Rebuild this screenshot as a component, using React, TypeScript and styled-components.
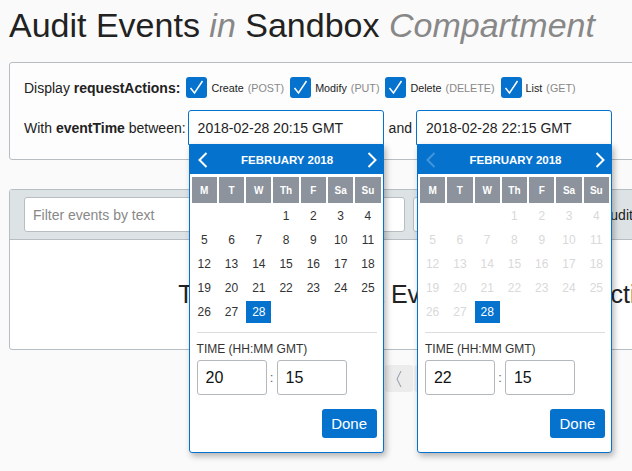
import styled, { createGlobalStyle } from "styled-components";

const GlobalStyle = createGlobalStyle`
	html {
		overflow: hidden;
		background: #fafafa;
	}
	body {
		margin: 0;
		padding: 0;
		font-family: "Liberation Sans", Arial, sans-serif;
		color: #222;
	}
`;

const BLUE = "#0572ce";
const BORDER = "#b6bec4";

const Page = styled.div`
	width: 854px;
	min-height: 100vh;
	box-sizing: border-box;
	padding: 5px 9px 0;
`;

const Title = styled.h1`
	margin: 0;
	font-size: 34px;
	line-height: 40px;
	font-weight: normal;
	color: #222;
	em {
		color: #888;
	}
`;

const FilterPanel = styled.div`
	margin-top: 17px;
	border: 1px solid ${BORDER};
	border-radius: 3px;
	background: #fdfdfd;
	padding: 14px;
	display: flex;
	flex-direction: column;
	gap: 12px;
	font-size: 14px;
`;

const Row = styled.div`
	display: flex;
	align-items: center;
`;

const RowLabel = styled.span<{ $tight?: boolean }>`
	margin-right: ${({ $tight }) => ($tight ? "2px" : "6px")};
	white-space: nowrap;
`;

const CheckItem = styled.label`
	display: flex;
	align-items: center;
	gap: 4px;
	margin-right: 6px;
	font-size: 10.75px;
	color: #222;
	white-space: nowrap;
	span.method {
		color: #888;
	}
`;

const CheckBox = styled.span`
	width: 21px;
	height: 21px;
	border-radius: 3px;
	background: ${BLUE};
	display: flex;
	align-items: center;
	justify-content: center;
`;

const DateField = styled.div`
	position: relative;
	width: 196px;
	height: 35px;
	box-sizing: border-box;
	border: 1px solid ${BLUE};
	border-radius: 3px 3px 0 0;
	background: #fff;
	display: flex;
	align-items: center;
	padding-left: 9px;
	font-size: 14px;
	color: #222;
`;

const AndText = styled.span`
	margin: 0 4px 0 5px;
`;

const Popup = styled.div`
	position: absolute;
	top: 100%;
	left: 0;
	right: -1px;
	z-index: 10;
	background: #fff;
	border: 1px solid ${BLUE};
	border-radius: 0 0 3px 3px;
	box-shadow: 2px 3px 6px rgba(0, 0, 0, 0.3);
`;

const CalHeader = styled.div`
	height: 29px;
	background: ${BLUE};
	color: #fff;
	display: flex;
	align-items: center;
	justify-content: space-between;
	padding: 0 6px 0 8px;
	font-weight: bold;
	font-size: 11.5px;
`;

const CalTable = styled.table`
	width: 100%;
	border-spacing: 2px;
	padding-top: 1px;
	table-layout: fixed;
	th {
		height: 26px;
		padding: 0;
		background: #8c939c;
		color: #fff;
		font-size: 10px;
		font-weight: bold;
	}
`;

const Day = styled.td<{ $selected?: boolean; $disabled?: boolean }>`
	height: 22px;
	padding: 0;
	text-align: center;
	font-size: 12px;
	background: ${({ $selected }) => ($selected ? BLUE : "transparent")};
	color: ${({ $selected, $disabled }) =>
		$selected ? "#fff" : $disabled ? "#d9d9d9" : "#333"};
`;

const CalFooter = styled.div`
	padding: 0 6px 14px 7px;
	margin-top: 7px;
	hr {
		margin: 0;
		border: 0;
		border-top: 1px solid #ddd;
	}
`;

const TimeLabel = styled.div`
	margin-top: 9px;
	font-size: 12px;
	line-height: 14px;
	color: #333;
`;

const TimeRow = styled.div`
	display: flex;
	align-items: center;
	margin-top: 4px;
	span {
		width: 10px;
		text-align: center;
		color: #666;
		font-size: 13px;
	}
`;

const TimeInput = styled.div`
	width: 70px;
	height: 35px;
	box-sizing: border-box;
	border: 1px solid #b3b8bd;
	border-radius: 3px;
	display: flex;
	align-items: center;
	padding-left: 8px;
	font-size: 16px;
	color: #111;
`;

const DoneRow = styled.div`
	display: flex;
	justify-content: flex-end;
	margin-top: 14px;
`;

const DoneButton = styled.button`
	width: 55px;
	height: 29px;
	border: 0;
	border-radius: 3px;
	background: ${BLUE};
	color: #fff;
	font-family: inherit;
	font-size: 15px;
	padding: 0;
`;

const EventsPanel = styled.div`
	margin-top: 29px;
	border: 1px solid ${BORDER};
	border-radius: 3px;
	overflow: hidden;
	background: #fff;
`;

const Toolbar = styled.div`
	display: flex;
	align-items: center;
	gap: 8px;
	padding: 7px 14px;
	background: #dde2e4;
	border-bottom: 1px solid ${BORDER};
	font-size: 14px;
`;

const FilterInput = styled.div`
	width: 381px;
	height: 35px;
	box-sizing: border-box;
	border: 1px solid ${BORDER};
	border-radius: 3px;
	background: #fff;
	display: flex;
	align-items: center;
	padding-left: 8px;
	color: #888;
	font-size: 14px;
`;

const TypeSelect = styled.div`
	width: 180px;
	height: 35px;
	box-sizing: border-box;
	border: 1px solid ${BORDER};
	border-radius: 3px;
	background: #fff;
`;

const EmptyMessage = styled.div`
	height: 109px;
	display: flex;
	align-items: center;
	justify-content: center;
	font-size: 25px;
	white-space: nowrap;
	color: #222;
`;

const Pager = styled.div`
	display: flex;
	justify-content: center;
	gap: 1px;
	margin-top: 15px;
`;

const PageButton = styled.div<{ $wide?: boolean }>`
	width: ${({ $wide }) => ($wide ? "28px" : "26px")};
	height: 27px;
	border-radius: 3px;
	background: #ececec;
	display: flex;
	align-items: center;
	justify-content: center;
	font-size: 13px;
	color: #555;
`;

const Chevron = ({ dir, faded }: { dir: "left" | "right"; faded?: boolean }) => (
	<svg width="10" height="16" viewBox="0 0 10 16">
		<polyline
			points={dir === "left" ? "8.5,1 1.5,8 8.5,15" : "1.5,1 8.5,8 1.5,15"}
			fill="none"
			stroke={faded ? "rgba(255,255,255,0.25)" : "#fff"}
			strokeWidth="2"
		/>
	</svg>
);

const Tick = () => (
	<svg width="21" height="21" viewBox="0 0 21 21">
		<polyline points="4.5,11 8.5,16 16.5,4" fill="none" stroke="#fff" strokeWidth="1.5" />
	</svg>
);

const weeks: (number | null)[][] = [
	[null, null, null, 1, 2, 3, 4],
	[5, 6, 7, 8, 9, 10, 11],
	[12, 13, 14, 15, 16, 17, 18],
	[19, 20, 21, 22, 23, 24, 25],
	[26, 27, 28, null, null, null, null],
];

const dayNames = ["M", "T", "W", "Th", "F", "Sa", "Su"];

const actions = [
	{ name: "Create", method: "POST" },
	{ name: "Modify", method: "PUT" },
	{ name: "Delete", method: "DELETE" },
	{ name: "List", method: "GET" },
];

const Calendar = (props: { hour: string; minute: string; locked?: boolean }) => (
	<Popup>
		<CalHeader>
			<Chevron dir="left" faded={props.locked} />
			<span>FEBRUARY 2018</span>
			<Chevron dir="right" />
		</CalHeader>
		<CalTable>
			<thead>
				<tr>
					{dayNames.map((d) => (
						<th key={d}>{d}</th>
					))}
				</tr>
			</thead>
			<tbody>
				{weeks.map((week, i) => (
					<tr key={i}>
						{week.map((day, j) => (
							<Day key={j} $selected={day === 28} $disabled={props.locked}>
								{day}
							</Day>
						))}
					</tr>
				))}
			</tbody>
		</CalTable>
		<CalFooter>
			<hr />
			<TimeLabel>TIME (HH:MM GMT)</TimeLabel>
			<TimeRow>
				<TimeInput>{props.hour}</TimeInput>
				<span>:</span>
				<TimeInput>{props.minute}</TimeInput>
			</TimeRow>
			<DoneRow>
				<DoneButton>Done</DoneButton>
			</DoneRow>
		</CalFooter>
	</Popup>
);

const App = () => {
	return (
		<Page>
			<GlobalStyle />
			<Title>
				Audit Events <em>in</em> Sandbox <em>Compartment</em>
			</Title>
			<FilterPanel>
				<Row>
					<RowLabel>
						Display <b>requestActions:</b>
					</RowLabel>
					{actions.map((a) => (
						<CheckItem key={a.name}>
							<CheckBox>
								<Tick />
							</CheckBox>
							{a.name} <span className="method">({a.method})</span>
						</CheckItem>
					))}
				</Row>
				<Row>
					<RowLabel $tight>
						With <b>eventTime</b> between:
					</RowLabel>
					<DateField>
						2018-02-28 20:15 GMT
						<Calendar hour="20" minute="15" />
					</DateField>
					<AndText>and</AndText>
					<DateField>
						2018-02-28 22:15 GMT
						<Calendar hour="22" minute="15" locked />
					</DateField>
				</Row>
			</FilterPanel>
			<EventsPanel>
				<Toolbar>
					<FilterInput>Filter events by text</FilterInput>
					<TypeSelect />
					<span>Audit details</span>
				</Toolbar>
				<EmptyMessage>There are no Audit Events for requestActions</EmptyMessage>
			</EventsPanel>
			<Pager>
				<PageButton $wide>
					<svg width="8" height="18" viewBox="0 0 8 18">
						<polyline points="6,1 2,9 6,17" fill="none" stroke="#8a9aa8" strokeWidth="1" />
					</svg>
				</PageButton>
				<PageButton>1</PageButton>
				<PageButton $wide>
					<svg width="8" height="18" viewBox="0 0 8 18">
						<polyline points="2,1 6,9 2,17" fill="none" stroke="#8a9aa8" strokeWidth="1" />
					</svg>
				</PageButton>
			</Pager>
		</Page>
	);
};

export default App;
